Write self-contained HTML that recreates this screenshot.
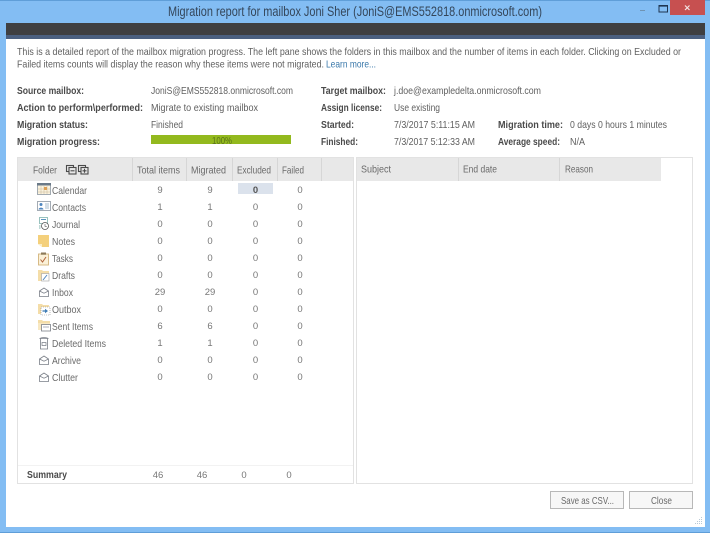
<!DOCTYPE html>
<html><head><meta charset="utf-8"><title>Migration report</title>
<style>
html,body{margin:0;padding:0;width:710px;height:533px;overflow:hidden;background:#fff}
svg{display:block;filter:blur(.3px)}
text{font-family:"Liberation Sans",sans-serif;font-size:10.5px;fill:#606060}
.b{font-weight:bold;fill:#4a4a4a;font-size:10.2px}
.h{fill:#6a6a6a}
.n{text-anchor:middle;fill:#777;font-size:9.5px}
</style></head><body>
<svg width="710" height="533" viewBox="0 0 710 533" xmlns="http://www.w3.org/2000/svg">
<rect width="710" height="533" fill="#83bdf3"/>
<rect x="0" y="0" width="710" height="1" fill="#5f9ed8"/>
<rect x="0" y="532" width="710" height="1" fill="#5f9ed8"/>
<rect x="6" y="23" width="699" height="12" fill="#3f3f41"/>
<rect x="6" y="35" width="699" height="4" fill="#4c6080"/>
<rect x="6" y="39" width="699" height="488" fill="#fff"/>
<text x="168" y="16" textLength="374" lengthAdjust="spacingAndGlyphs" style="font-size:13.5px;fill:#34465a">Migration report for mailbox Joni Sher (JoniS@EMS552818.onmicrosoft.com)</text>
<rect x="640" y="10" width="5" height="1" fill="#6f93b3"/>
<rect x="659" y="5.5" width="8.5" height="6.5" fill="none" stroke="#1f3550" stroke-width="1"/><rect x="659" y="5" width="9" height="1.6" fill="#1f3550"/>
<rect x="670" y="0" width="35" height="15" fill="#c75050"/>
<path d="M685 5.5 L689.5 10 M689.5 5.5 L685 10" stroke="#f4e4e4" stroke-width="1.2"/>

<text x="17" y="55" textLength="664" lengthAdjust="spacingAndGlyphs">This is a detailed report of the mailbox migration progress. The left pane shows the folders in this mailbox and the number of items in each folder. Clicking on Excluded or</text>
<text x="17" y="67.5" textLength="307" lengthAdjust="spacingAndGlyphs">Failed items counts will display the reason why these items were not migrated.</text>
<text x="326" y="67.5" textLength="50" lengthAdjust="spacingAndGlyphs" style="fill:#3a78aa">Learn more...</text>

<text class="b" x="17" y="94" textLength="67" lengthAdjust="spacingAndGlyphs">Source mailbox:</text>
<text class="b" x="17" y="111" textLength="126" lengthAdjust="spacingAndGlyphs">Action to perform\performed:</text>
<text class="b" x="17" y="128" textLength="71" lengthAdjust="spacingAndGlyphs">Migration status:</text>
<text class="b" x="17" y="145" textLength="83" lengthAdjust="spacingAndGlyphs">Migration progress:</text>
<text x="151" y="94" textLength="142" lengthAdjust="spacingAndGlyphs">JoniS@EMS552818.onmicrosoft.com</text>
<text x="151" y="111" textLength="107" lengthAdjust="spacingAndGlyphs">Migrate to existing mailbox</text>
<text x="151" y="128" textLength="32" lengthAdjust="spacingAndGlyphs">Finished</text>
<rect x="151" y="135" width="140" height="9" fill="#93b91e"/>
<text x="212" y="144" textLength="20" lengthAdjust="spacingAndGlyphs" style="fill:#5a7418">100%</text>

<text class="b" x="321" y="94" textLength="65" lengthAdjust="spacingAndGlyphs">Target mailbox:</text>
<text class="b" x="321" y="111" textLength="61" lengthAdjust="spacingAndGlyphs">Assign license:</text>
<text class="b" x="321" y="128" textLength="33" lengthAdjust="spacingAndGlyphs">Started:</text>
<text class="b" x="321" y="145" textLength="37" lengthAdjust="spacingAndGlyphs">Finished:</text>
<text x="394" y="94" textLength="147" lengthAdjust="spacingAndGlyphs">j.doe@exampledelta.onmicrosoft.com</text>
<text x="394" y="111" textLength="46" lengthAdjust="spacingAndGlyphs">Use existing</text>
<text x="394" y="128" textLength="81" lengthAdjust="spacingAndGlyphs">7/3/2017 5:11:15 AM</text>
<text x="394" y="145" textLength="81" lengthAdjust="spacingAndGlyphs">7/3/2017 5:12:33 AM</text>
<text class="b" x="498" y="128" textLength="65" lengthAdjust="spacingAndGlyphs">Migration time:</text>
<text class="b" x="498" y="145" textLength="62" lengthAdjust="spacingAndGlyphs">Average speed:</text>
<text x="570" y="128" textLength="97" lengthAdjust="spacingAndGlyphs">0 days 0 hours 1 minutes</text>
<text x="570" y="145" textLength="15" lengthAdjust="spacingAndGlyphs">N/A</text>

<!-- left panel -->
<rect x="17.5" y="157.5" width="336" height="326" fill="#fff" stroke="#e2e2e2"/>
<rect x="18" y="158" width="335" height="23" fill="#e8e8e8"/>
<path d="M132.5 158V181M186.5 158V181M232.5 158V181M277.5 158V181M321.5 158V181" stroke="#d6d6d6"/>
<text class="h" x="33" y="173.5" textLength="24" lengthAdjust="spacingAndGlyphs">Folder</text>
<g fill="none" stroke="#4a4a4a" stroke-width="1.1">
<rect x="66.5" y="165.5" width="7" height="6"/><rect x="69" y="167.5" width="7" height="6.5" fill="#e8e8e8"/><path d="M70.5 170.8h4"/>
<rect x="78.5" y="165.5" width="7" height="6"/><rect x="81" y="167.5" width="7" height="6.5" fill="#e8e8e8"/><path d="M82.5 170.8h4M84.5 168.8v4"/>
</g>
<text class="h" x="137" y="173.5" textLength="43" lengthAdjust="spacingAndGlyphs">Total items</text>
<text class="h" x="191" y="173.5" textLength="35" lengthAdjust="spacingAndGlyphs">Migrated</text>
<text class="h" x="237" y="173.5" textLength="34" lengthAdjust="spacingAndGlyphs">Excluded</text>
<text class="h" x="282" y="173.5" textLength="22" lengthAdjust="spacingAndGlyphs">Failed</text>

<rect x="238" y="183" width="35" height="11" fill="#dbe2ec"/>

<!-- icons -->
<!-- calendar -->
<rect x="37.5" y="184.5" width="13" height="10" fill="#fbf3df" stroke="#8d97a2" stroke-width=".8"/><rect x="37" y="183" width="14" height="2.5" fill="#6a7988"/>
<path d="M41 186v8M44 186v8M47 186v8M38 189h12M38 192h12" stroke="#c5b698" stroke-width=".5"/><rect x="44" y="187" width="3" height="3" fill="#dd9f55"/>
<!-- contacts -->
<rect x="37.5" y="201.5" width="13" height="9" fill="#fff" stroke="#8d97a2" stroke-width=".8"/><circle cx="41" cy="204.5" r="1.5" fill="#4f86bf"/><path d="M38.5 209.5c.3-2.5 4.7-2.5 5 0z" fill="#4f86bf"/><path d="M45 204h4M45 206h4M45 208h4" stroke="#8fa8bf" stroke-width=".7"/>
<!-- journal -->
<rect x="39.5" y="217.5" width="8" height="6" fill="#fff" stroke="#7fb3ae" stroke-width=".8"/><path d="M41 219.5h5" stroke="#5a93bd"/><circle cx="45" cy="226" r="3.5" fill="#fff" stroke="#555" stroke-width=".8"/><path d="M45 224v2.3h1.8" fill="none" stroke="#555" stroke-width=".6"/><path d="M39 226h1.5M39 228h1.5" stroke="#7fb3ae"/>
<!-- notes -->
<path d="M38 235h11v12h-7l-4-3z" fill="#f4d07c"/><path d="M38 244h4v3z" fill="#fbeec8"/>
<!-- tasks -->
<rect x="38.5" y="254" width="10" height="11" fill="#fbf1d8" stroke="#d3b47c" stroke-width=".9"/><rect x="41" y="252.5" width="5" height="2.2" fill="#8d7a58"/><path d="M40.5 259.5l2 2.5 3.5-5" fill="none" stroke="#b0623a" stroke-width="1"/>
<!-- drafts -->
<path d="M38 270h4l1 1h6v10h-11z" fill="#f4dda8"/><rect x="41.5" y="273.5" width="7.5" height="7.5" fill="#fff" stroke="#a0a0a0" stroke-width=".6"/><path d="M43 280l4-5" stroke="#4f86bf" stroke-width="1"/>
<!-- envelopes -->
<g fill="#fff" stroke="#7a7f88" stroke-width=".8">
<path d="M39.5 291l4.5-3 4.5 3v5.5h-9z"/><path d="M39.5 291l4.5 2.2 4.5-2.2" fill="none"/>
<path d="M39.5 359l4.5-3 4.5 3v5.5h-9z"/><path d="M39.5 359l4.5 2.2 4.5-2.2" fill="none"/>
<path d="M39.5 376l4.5-3 4.5 3v5.5h-9z"/><path d="M39.5 376l4.5 2.2 4.5-2.2" fill="none"/>
</g>
<!-- outbox -->
<path d="M38 304h4l1 1h6v9h-11z" fill="#f4dda8"/><rect x="41" y="307" width="9" height="8" fill="#fff" stroke="#8a8a8a" stroke-width=".6" stroke-dasharray="1 1"/><path d="M42.5 311h3" stroke="#3f7cb5" stroke-width="1.3"/><path d="M45 308.8l3 2.2-3 2.2z" fill="#3f7cb5"/>
<!-- sent -->
<path d="M38 320h4l1 1h7v3h-12z" fill="#f4dda8"/><rect x="38" y="323" width="12" height="7" fill="#f8e8c2"/><rect x="41.5" y="324.5" width="9" height="6.5" fill="#fff" stroke="#7a7f88" stroke-width=".8"/><path d="M43 327h6" stroke="#7a7f88" stroke-width=".6"/>
<!-- deleted -->
<path d="M40.5 338.5h7v10.5h-7z" fill="#fff" stroke="#7a7f88" stroke-width=".8"/><path d="M39.5 338.5q4.5-2 9 0M42 342.5h4v3h-4z" fill="none" stroke="#7a7f88" stroke-width=".7"/>

<g>
<text class="h" x="52" y="194" textLength="35" lengthAdjust="spacingAndGlyphs">Calendar</text>
<text class="h" x="52" y="211" textLength="34" lengthAdjust="spacingAndGlyphs">Contacts</text>
<text class="h" x="52" y="228" textLength="28" lengthAdjust="spacingAndGlyphs">Journal</text>
<text class="h" x="52" y="245" textLength="23" lengthAdjust="spacingAndGlyphs">Notes</text>
<text class="h" x="52" y="262" textLength="21" lengthAdjust="spacingAndGlyphs">Tasks</text>
<text class="h" x="52" y="279" textLength="23" lengthAdjust="spacingAndGlyphs">Drafts</text>
<text class="h" x="52" y="296" textLength="21" lengthAdjust="spacingAndGlyphs">Inbox</text>
<text class="h" x="52" y="313" textLength="29" lengthAdjust="spacingAndGlyphs">Outbox</text>
<text class="h" x="52" y="330" textLength="41" lengthAdjust="spacingAndGlyphs">Sent Items</text>
<text class="h" x="52" y="347" textLength="54" lengthAdjust="spacingAndGlyphs">Deleted Items</text>
<text class="h" x="52" y="364" textLength="29" lengthAdjust="spacingAndGlyphs">Archive</text>
<text class="h" x="52" y="381" textLength="26" lengthAdjust="spacingAndGlyphs">Clutter</text>
</g>

<text class="n" x="160" y="193">9</text><text class="n" x="210" y="193">9</text><text class="n" x="255.5" y="193" style="font-weight:bold;fill:#555">0</text><text class="n" x="300" y="193">0</text>
<text class="n" x="160" y="210">1</text><text class="n" x="210" y="210">1</text><text class="n" x="255.5" y="210">0</text><text class="n" x="300" y="210">0</text>
<text class="n" x="160" y="227">0</text><text class="n" x="210" y="227">0</text><text class="n" x="255.5" y="227">0</text><text class="n" x="300" y="227">0</text>
<text class="n" x="160" y="244">0</text><text class="n" x="210" y="244">0</text><text class="n" x="255.5" y="244">0</text><text class="n" x="300" y="244">0</text>
<text class="n" x="160" y="261">0</text><text class="n" x="210" y="261">0</text><text class="n" x="255.5" y="261">0</text><text class="n" x="300" y="261">0</text>
<text class="n" x="160" y="278">0</text><text class="n" x="210" y="278">0</text><text class="n" x="255.5" y="278">0</text><text class="n" x="300" y="278">0</text>
<text class="n" x="160" y="295">29</text><text class="n" x="210" y="295">29</text><text class="n" x="255.5" y="295">0</text><text class="n" x="300" y="295">0</text>
<text class="n" x="160" y="312">0</text><text class="n" x="210" y="312">0</text><text class="n" x="255.5" y="312">0</text><text class="n" x="300" y="312">0</text>
<text class="n" x="160" y="329">6</text><text class="n" x="210" y="329">6</text><text class="n" x="255.5" y="329">0</text><text class="n" x="300" y="329">0</text>
<text class="n" x="160" y="346">1</text><text class="n" x="210" y="346">1</text><text class="n" x="255.5" y="346">0</text><text class="n" x="300" y="346">0</text>
<text class="n" x="160" y="363">0</text><text class="n" x="210" y="363">0</text><text class="n" x="255.5" y="363">0</text><text class="n" x="300" y="363">0</text>
<text class="n" x="160" y="380">0</text><text class="n" x="210" y="380">0</text><text class="n" x="255.5" y="380">0</text><text class="n" x="300" y="380">0</text>

<path d="M18 465.5H353" stroke="#f2f2f2"/>
<text class="b" x="27" y="478" textLength="40" lengthAdjust="spacingAndGlyphs">Summary</text>
<text class="n" x="158" y="478">46</text><text class="n" x="202" y="478">46</text><text class="n" x="244" y="478">0</text><text class="n" x="289" y="478">0</text>

<!-- right panel -->
<rect x="356.5" y="157.5" width="336" height="326" fill="#fff" stroke="#e2e2e2"/>
<rect x="357" y="158" width="304" height="23" fill="#e8e8e8"/>
<path d="M458.5 158V181M559.5 158V181" stroke="#d6d6d6"/>
<text class="h" x="361" y="172.5" textLength="30" lengthAdjust="spacingAndGlyphs">Subject</text>
<text class="h" x="463" y="172.5" textLength="34" lengthAdjust="spacingAndGlyphs">End date</text>
<text class="h" x="565" y="172.5" textLength="28" lengthAdjust="spacingAndGlyphs">Reason</text>

<!-- buttons -->
<rect x="550.5" y="491.5" width="73" height="17" fill="#f7f7f7" stroke="#b8b8b8"/>
<rect x="629.5" y="491.5" width="63" height="17" fill="#f7f7f7" stroke="#b8b8b8"/>
<text class="h" x="561" y="504" textLength="53" lengthAdjust="spacingAndGlyphs">Save as CSV...</text>
<text class="h" x="651" y="504" textLength="21" lengthAdjust="spacingAndGlyphs">Close</text>

<!-- grip -->
<g fill="#b9c9d6"><rect x="701" y="517" width="1" height="1"/><rect x="699" y="519" width="1" height="1"/><rect x="701" y="519" width="1" height="1"/><rect x="697" y="521" width="1" height="1"/><rect x="699" y="521" width="1" height="1"/><rect x="701" y="521" width="1" height="1"/><rect x="695" y="523" width="1" height="1"/><rect x="697" y="523" width="1" height="1"/><rect x="699" y="523" width="1" height="1"/><rect x="701" y="523" width="1" height="1"/></g>
</svg>
</body></html>
